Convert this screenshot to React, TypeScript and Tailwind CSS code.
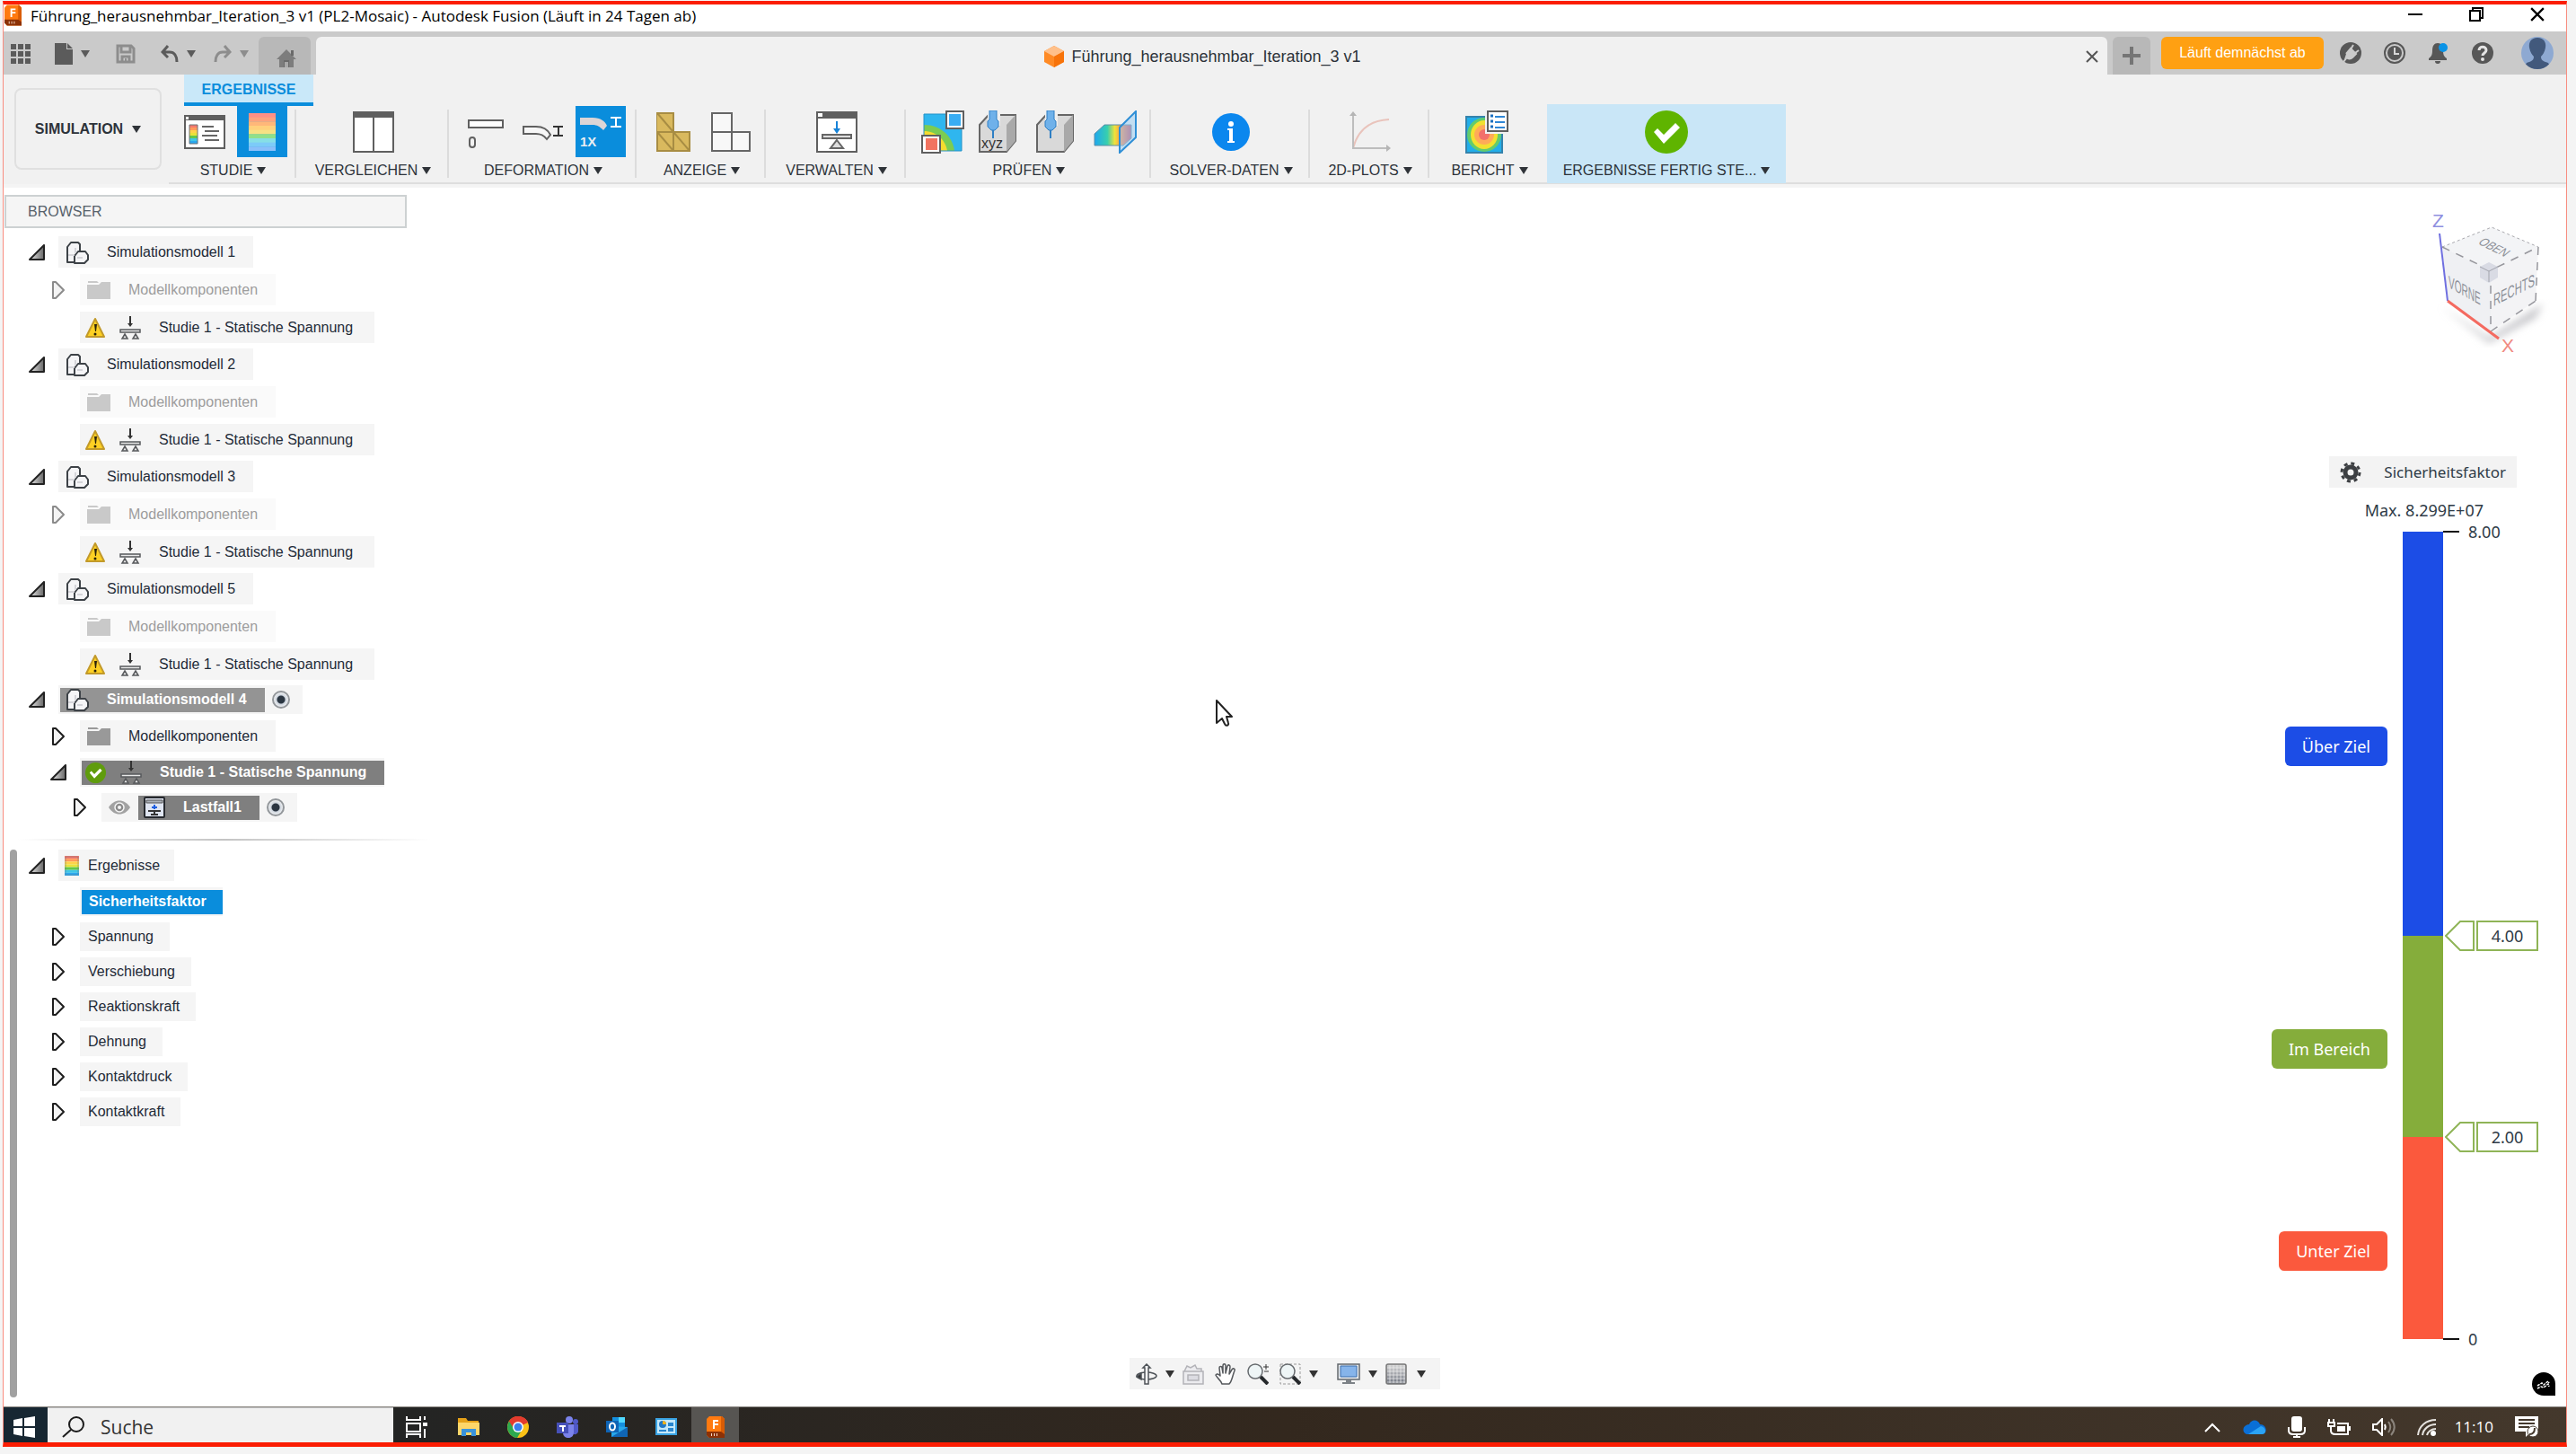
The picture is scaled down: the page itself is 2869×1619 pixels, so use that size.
import type { ReactNode } from "react";

type IconProps = { className?: string };

const Caret = ({ className = "h-2 w-[10px] fill-[#2f3338]" }: IconProps) => (
  <svg viewBox="0 0 10 8" className={className} aria-hidden="true">
    <path d="M0 0h10L5 8z" />
  </svg>
);

/* ---------- title bar and quick access icons ---------- */

const FusionIcon = ({ className }: IconProps) => (
  <svg viewBox="0 0 20 24" className={className} aria-hidden="true">
    <path d="M3 0h14l3 3v21H3l-3-3V3z" fill="#ff7a10" />
    <path d="M16 0h1l3 3v21l-4-4z" fill="#d95c05" />
    <path d="M0 17h16l4 3v4H3l-3-3z" fill="#8c3106" />
    <path d="M7 14V4h6v2H9v2h4v2H9v4z" fill="#fff" />
    <path d="M5 19h1v3H5zM8 19h1v3H8zM11 19h1v3h-1z" fill="#f3d9c8" />
  </svg>
);

const GridIcon = () => (
  <svg viewBox="0 0 22 22" className="h-[22px] w-[22px] fill-[#5b5b5b]">
    {[0, 8, 16].map((y) =>
      [0, 8, 16].map((x) => <rect key={`${x}-${y}`} x={x} y={y} width="6" height="6" />)
    )}
  </svg>
);

const FileIcon = () => (
  <svg viewBox="0 0 20 24" className="h-6 w-5 fill-[#5b5b5b]">
    <path d="M0 0h13v7h7v17H0zM14 0l6 6h-6z" />
  </svg>
);

const SaveIcon = () => (
  <svg viewBox="0 0 22 22" className="h-[22px] w-[22px]" fill="none" stroke="#8d8d8d" strokeWidth="3">
    <path d="M2 2h15l3 3v15H2z" />
    <path d="M6 2v7h10V2M7 20v-6h8v6" />
    <path d="M11 16v4" strokeWidth="2" />
  </svg>
);

const UndoIcon = ({ className = "" }: IconProps) => (
  <svg viewBox="0 0 20 20" className={`h-5 w-5 ${className}`} fill="none" strokeWidth="3">
    <path d="M8 1L2 8l6 6M2 8h8c5 0 8 4 8 11" />
  </svg>
);

const HomeIcon = () => (
  <svg viewBox="0 0 24 20" className="h-5 w-6">
    <path d="M12 0l11 11h-3v9H4v-9H1z" fill="#7d7d7d" />
    <path d="M17 1h3v6h-3zM9 12h6v8H9z" fill="#6a6a6a" />
    <path d="M10 14h4v6h-4z" fill="#a8a8a8" />
  </svg>
);

const DocumentCube = () => (
  <svg viewBox="0 0 22 24" className="h-6 w-[22px]">
    <path d="M11 0l11 6v12l-11 6L0 18V6z" fill="#ff8a24" />
    <path d="M11 0l11 6-11 6L0 6z" fill="#ffc08a" />
    <path d="M11 12l11-6v12l-11 6z" fill="#f7730a" />
  </svg>
);

const CloseIcon = ({ className }: IconProps) => (
  <svg viewBox="0 0 14 14" className={className} fill="none" strokeWidth="2">
    <path d="M1 1l12 12M13 1L1 13" />
  </svg>
);

const PlugIcon = () => (
  <svg viewBox="0 0 24 24" className="h-6 w-6">
    <circle cx="12" cy="12" r="12" fill="#575757" />
    <path d="M7 13l5-6 6 6-4 4c-2 2-5 2-6 0l-4 5" fill="#cbcbcb" stroke="#cbcbcb" strokeWidth="2" />
    <path d="M12 8l3-5M17 12l4-3" stroke="#cbcbcb" strokeWidth="2" />
  </svg>
);

const ClockIcon = () => (
  <svg viewBox="0 0 24 24" className="h-6 w-6" fill="none">
    <circle cx="12" cy="12" r="11" stroke="#575757" strokeWidth="2" />
    <circle cx="12" cy="12" r="8" fill="#575757" />
    <path d="M12 6v7h5" stroke="#d6d6d6" strokeWidth="2" />
  </svg>
);

const BellIcon = () => (
  <svg viewBox="0 0 24 24" className="h-6 w-6">
    <path d="M11 1c4 0 6 3 6 8 0 5 1 7 4 9v2H1v-2c3-2 4-4 4-9 0-5 2-8 6-8zM8 21h6c0 2-1 3-3 3s-3-1-3-3z" fill="#575757" />
    <circle cx="17" cy="6" r="5" fill="#0a93e6" />
  </svg>
);

const HelpIcon = () => (
  <svg viewBox="0 0 24 24" className="h-6 w-6">
    <circle cx="12" cy="12" r="12" fill="#575757" />
    <path d="M8 9c0-5 8-5 8 0 0 3-4 3-4 6" fill="none" stroke="#e4e4e4" strokeWidth="3" />
    <circle cx="12" cy="19" r="2" fill="#e4e4e4" />
  </svg>
);

const Avatar = () => (
  <svg viewBox="0 0 36 36" className="h-9 w-9">
    <clipPath id="avatar">
      <circle cx="18" cy="18" r="18" />
    </clipPath>
    <g clipPath="url(#avatar)">
      <path d="M0 0h36v36H0z" fill="#8ea9d2" />
      <path d="M18 1c7 0 10 5 9 11-1 5-3 8-5 10 0 4 2 5 8 7l4 7H2l4-7c6-2 8-3 8-7-2-2-4-5-5-10C8 6 11 1 18 1z" fill="#42597c" />
    </g>
  </svg>
);

/* ---------- ribbon icons ---------- */

const Spectrum = ({ x, y, width, height }: { x: number; y: number; width: number; height: number }) => {
  const bands = ["#f4796c", "#ff9a5a", "#ffd24a", "#e9e23a", "#63c84a", "#3fc6e8", "#2aa8f0"];
  return (
    <>
      {bands.map((fill, i) => (
        <rect key={fill} x={x} y={y + (i * height) / 7} width={width} height={height / 7} fill={fill} />
      ))}
    </>
  );
};

const StudyPanelIcon = () => (
  <svg viewBox="0 0 46 38" className="h-[38px] w-[46px]">
    <path d="M1 1h44v36H1z" fill="#fff" stroke="#5f5f5f" strokeWidth="2" />
    <path d="M0 0h46v6H0z" fill="#5f5f5f" />
    <path d="M2 2h3v3H2z" fill="#fff" />
    <Spectrum x={6} y={11} width={9} height={21} />
    <path d="M6 11h9v21H6z" fill="none" stroke="#6a7076" />
    <path d="M20 13h13M23 18h16M20 23h17M23 28h16" stroke="#666" strokeWidth="2" />
  </svg>
);

const ResultBandsIcon = () => (
  <svg viewBox="0 0 30 42" className="h-[42px] w-[30px]">
    {["#ff9086", "#ffa27d", "#ffb779", "#ffd07c", "#f5e184", "#8fe08a", "#86dfe6", "#7ccbf8", "#8abffa"].map((fill, i) => (
      <rect key={fill} y={(i * 42) / 9} width="30" height="5" fill={fill} />
    ))}
  </svg>
);

const CompareIcon = () => (
  <svg viewBox="0 0 46 46" className="h-[46px] w-[46px]">
    <path d="M1 1h44v44H1z" fill="#fff" stroke="#5f5f5f" strokeWidth="2" />
    <path d="M0 0h46v7H0z" fill="#5f5f5f" />
    <path d="M23 7v38" stroke="#5f5f5f" strokeWidth="2" />
  </svg>
);

const UndeformedIcon = () => (
  <svg viewBox="0 0 40 46" className="h-[46px] w-10" fill="none" stroke="#606060" strokeWidth="2">
    <path d="M1 10h38v8H1z" fill="#fff" />
    <rect x="2" y="29" width="6" height="11" rx="3" />
  </svg>
);

const ActualIcon = () => (
  <svg viewBox="0 0 46 46" className="h-[46px] w-[46px]" fill="none" stroke="#606060" strokeWidth="2">
    <path d="M1 17h14c8 0 13 3 16 9l-4 5c-4-5-7-6-12-6H1z" fill="#f7f7f7" />
    <path d="M34 17h11M34 27h11M40 17v10" stroke="#333" />
  </svg>
);

const AdjustedIcon = () => (
  <div className="flex flex-col items-start gap-1 text-[15px] leading-4 font-bold text-[#e9eef2]">
    <svg viewBox="0 0 46 18" className="h-[18px] w-[46px]" fill="none">
      <path d="M0 3h14c9 0 14 4 16 9l-4 5c-4-4-7-6-12-6H0z" fill="#dcd5d6" />
      <path d="M34 3h12M34 13h12M40 3v10" stroke="#fff" strokeWidth="2" />
    </svg>
    1X
  </div>
);

const MeshIcon = () => (
  <svg viewBox="0 0 38 44" className="h-[44px] w-[38px]" fill="#d9b95e" stroke="#a88d43" strokeWidth="2">
    <path d="M1 1h18v21h18v21H1z" />
    <path d="M1 1l18 21H1M19 22v21L1 22M37 43L19 22" />
  </svg>
);

const OutlineIcon = () => (
  <svg viewBox="0 0 44 44" className="h-[44px] w-[44px]" fill="#f8f8f8" stroke="#666" strokeWidth="2">
    <path d="M1 1h22v21h20v21H1zM1 22h22v21" />
  </svg>
);

const ManageIcon = () => (
  <svg viewBox="0 0 46 46" className="h-[46px] w-[46px]">
    <path d="M1 1h44v44H1z" fill="#fff" stroke="#5f5f5f" strokeWidth="2" />
    <path d="M0 0h46v8H0z" fill="#5f5f5f" />
    <path d="M2 2h5v4H2z" fill="#fff" />
    <path d="M7 26h32v4H7zM23 32l7 9H16z" fill="#ddd" stroke="#666" strokeWidth="2" />
    <path d="M22 11h2v8h3l-4 6-4-6h3z" fill="#1783d8" />
  </svg>
);

const HotSpotsIcon = () => (
  <svg viewBox="0 0 48 48" className="h-12 w-12">
    <path d="M3 4h42v41H3z" fill="#2fb6ef" />
    <path d="M3 16c19 0 32 13 34 29H3z" fill="#7ccc52" />
    <path d="M3 23c14 0 24 10 26 22H3z" fill="#f6dc2f" />
    <path d="M3 4h42v41H3z" fill="none" stroke="#2592c7" />
    <path d="M28 1h19v19H28zM1 28h20v19H1z" fill="#fff" stroke="#5f5f5f" strokeWidth="2" />
    <path d="M31 4h13v13H31z" fill="#39adf3" />
    <path d="M5 31h13v13H5z" fill="#f27360" />
  </svg>
);

const ProbeIcon = ({ label }: { label?: string }) => (
  <svg viewBox="0 0 48 48" className="h-12 w-12">
    <path d="M1 16L11 5h30v29L31 46H1z" fill="#d9d9d9" stroke="#666" strokeWidth="2" />
    <path d="M31 16L41 5v29L31 46z" fill="#a9a9a9" />
    <path d="M10 4h14v13H10z" fill="#efefef" />
    <path d="M12 0h8v10l2 2v6l-4 4h-4l-4-4v-6l2-2z" fill="#6fb1ea" stroke="#2f7fc4" />
    <path d="M16 22v9" stroke="#2f7fc4" strokeWidth="2" />
    {label && (
      <text x="3" y="42" className="fill-[#333] font-['Liberation_Sans'] text-[16px]">
        {label}
      </text>
    )}
  </svg>
);

const SliceIcon = () => (
  <svg viewBox="0 0 48 48" className="h-12 w-12">
    <defs>
      <linearGradient id="slice">
        <stop offset="0" stopColor="#1ea7ef" />
        <stop offset=".35" stopColor="#37cfae" />
        <stop offset=".55" stopColor="#f0e23a" />
        <stop offset=".75" stopColor="#ff8a4a" />
        <stop offset="1" stopColor="#c2476b" />
      </linearGradient>
    </defs>
    <path d="M1 26l11-10h30v15l-9 8H1z" fill="url(#slice)" stroke="#5d8ea6" />
    <path d="M29 19L47 1v29L29 47z" fill="#9ccdf3" fillOpacity=".55" stroke="#2f8fd6" strokeWidth="2" />
  </svg>
);

const InfoIcon = () => (
  <svg viewBox="0 0 42 42" className="h-[42px] w-[42px]">
    <circle cx="21" cy="21" r="21" fill="#0b87ee" />
    <circle cx="21" cy="12" r="3" fill="#fff" />
    <path d="M17 17h6v14h2v2h-8v-2h2V19h-2z" fill="#fff" />
  </svg>
);

const PlotIcon = () => (
  <svg viewBox="0 0 46 46" className="h-[46px] w-[46px]" fill="none" strokeWidth="2">
    <path d="M4 41C9 22 22 10 44 9" stroke="#e9c3bb" />
    <path d="M4 2v39h40" stroke="#bdbdbd" />
    <path d="M4 0l4 5H0zM46 41l-5 4v-8z" fill="#b5b5b5" />
  </svg>
);

const ReportIcon = () => (
  <svg viewBox="0 0 54 48" className="h-12 w-[54px]">
    <path d="M1 7h40v40H1z" fill="#22aeea" stroke="#3583ac" strokeWidth="2" />
    <ellipse cx="21" cy="27" rx="19" ry="19" fill="#63cc6c" />
    <ellipse cx="21" cy="27" rx="15" ry="16" fill="#f2e130" />
    <ellipse cx="21" cy="27" rx="11" ry="11" fill="#ffab58" />
    <ellipse cx="21" cy="27" rx="6" ry="6" fill="#f2706b" />
    <path d="M22 0h27v26H22z" fill="#f1f1f1" />
    <path d="M25 1h22v22H25z" fill="#fff" stroke="#5f5f5f" strokeWidth="2" />
    <path d="M28 6h3M28 12h3M28 18h3" stroke="#1b6fc0" strokeWidth="3" />
    <path d="M33 7h11M33 13h11M33 19h11" stroke="#2e86d6" strokeWidth="2" />
  </svg>
);

const CheckCircle = ({ className }: IconProps) => (
  <svg viewBox="0 0 48 48" className={className}>
    <circle cx="24" cy="24" r="24" />
    <path d="M10 24l4-4 7 7 13-13 5 5-18 18z" fill="#fff" />
  </svg>
);

/* ---------- browser tree icons ---------- */

const Expanded = () => (
  <svg viewBox="0 0 18 18" className="h-[18px] w-[18px]">
    <defs>
      <linearGradient id="expanded" x1="0" x2="1">
        <stop offset="0" stopColor="#eee" />
        <stop offset="1" stopColor="#666" />
      </linearGradient>
    </defs>
    <path d="M17 1v16H1z" fill="url(#expanded)" stroke="#222" strokeWidth="2" strokeLinejoin="round" />
  </svg>
);

const Collapsed = ({ muted }: { muted?: boolean }) => (
  <svg viewBox="0 0 16 20" className="h-5 w-4" fill="#f4f4f4" strokeWidth="2" strokeLinejoin="round">
    <path d="M2 1h3l9 9-9 9H2z" stroke={muted ? "#8b8b8b" : "#1e1e1e"} />
  </svg>
);

const ModelIcon = () => (
  <svg viewBox="0 0 26 26" className="h-[26px] w-[26px]" stroke="#3d4247" strokeWidth="2" strokeLinejoin="round">
    <path d="M2 7l4-5h8l2 2v7l-3 4v9H2z" fill="#f5f5f7" />
    <path d="M10 17l4-5h8l3 4v5l-4 4H10z" fill="#f5f5f7" />
    <path d="M3 16h7M11 8v6M19 19h-6" stroke="#d5d5da" />
  </svg>
);

const FolderIcon = ({ muted }: { muted?: boolean }) => (
  <svg viewBox="0 0 26 20" className={muted ? "h-5 w-[26px] fill-[#c9c9c9]" : "h-5 w-[26px] fill-[#999]"}>
    <path d="M1 0h10l2 2H1zM0 4h13l3-3h10v19H0z" />
  </svg>
);

const WarningIcon = () => (
  <svg viewBox="0 0 22 24" className="h-6 w-[22px]">
    <path d="M11 2l10 20H1z" fill="#fdd023" stroke="#c29a2a" strokeWidth="2" strokeLinejoin="round" />
    <path d="M10 8h3l-1 8h-1z" fill="#2a2209" />
    <circle cx="11" cy="19" r="1.500" fill="#2a2209" />
  </svg>
);

const StudyIcon = () => (
  <svg viewBox="0 0 24 26" className="h-[26px] w-6" fill="none" stroke="#57595c" strokeWidth="1.500">
    <path d="M12 0v9" stroke="#333" strokeWidth="2" />
    <path d="M9 8h6l-3 4z" fill="#333" stroke="none" />
    <path d="M1 15h22v3H1z" fill="#e8e8e8" />
    <path d="M6 20l3 5H3zM18 20l3 5h-6z" fill="#e8e8e8" />
  </svg>
);

const EyeIcon = () => (
  <svg viewBox="0 0 24 18" className="h-[18px] w-6">
    <path d="M0 9c6-10 18-10 24 0-6 10-18 10-24 0z" fill="#a2a2a2" />
    <circle cx="12" cy="9" r="5" fill="#8a8a8a" stroke="#f5f5f5" strokeWidth="1.500" />
    <circle cx="12" cy="9" r="2" fill="#f5f5f5" />
  </svg>
);

const LoadCaseIcon = () => (
  <svg viewBox="0 0 24 24" className="h-6 w-6">
    <rect x="1" y="1" width="22" height="22" rx="1" fill="#dfe5f1" stroke="#26292e" strokeWidth="2" />
    <path d="M3 4h18v3H3z" fill="#aab0b8" stroke="#555" />
    <path d="M12 9v5M9 12h6" stroke="#1d5fe0" strokeWidth="2" />
    <path d="M5 16h14M12 16v4M8 20h8" stroke="#333" strokeWidth="2" />
  </svg>
);

const LegendIcon = () => (
  <svg viewBox="0 0 16 22" className="h-[22px] w-4">
    <Spectrum x={0} y={0} width={16} height={22} />
    <path d="M1 1h14v20H1z" fill="none" stroke="#6d7a86" strokeOpacity=".5" />
  </svg>
);

/* ---------- canvas ---------- */

const ViewCube = () => (
  <svg viewBox="0 0 140 170" className="h-[170px] w-[140px]" fill="none">
    <defs>
      <filter id="soft">
        <feGaussianBlur stdDeviation="4" />
      </filter>
    </defs>
    <path d="M20 112l52 34 60-38-8 16-52 28z" fill="#c6c6ca" filter="url(#soft)" />
    <path d="M20 45l55-22 52 22-53 26z" fill="#f3f4f6" />
    <path d="M20 45l54 26v68l-48-34z" fill="#eff0f3" />
    <path d="M127 45L74 71v68l50-34z" fill="#f3f3f5" />
    <path d="M20 45l55-22 52 22" stroke="#a8a8ad" strokeDasharray="3 3" />
    <path d="M20 45l54 26 53-26-3 60M74 71v68l50-34" stroke="#97979d" strokeWidth="1.500" strokeDasharray="9 8" />
    <path d="M62 67l10-5 10 5v12l-10 6-10-6z" fill="#d9dbe4" />
    <path d="M62 67l10 5 10-5M72 72v12" stroke="#a2a4ad" />
    <g className="fill-[#8d9199] font-['Liberation_Sans'] text-[19px]">
      <text transform="matrix(.56 .28 -.6 .5 59 41)">OBEN</text>
      <text transform="matrix(.53 .29 0 1 27 90)">VORNE</text>
      <text transform="matrix(.59 -.295 0 1 77 111)">RECHTS</text>
    </g>
    <path d="M17 30l9 75" stroke="#6f6fe0" strokeWidth="2" />
    <path d="M26 105l57 42" stroke="#f46a60" strokeWidth="3" />
    <g className="font-['Liberation_Sans'] text-[21px]">
      <text x="9" y="23" fill="#8f8fe0">Z</text>
      <text x="86" y="162" fill="#f08a80">X</text>
    </g>
  </svg>
);

const GearIcon = () => (
  <svg viewBox="0 0 24 24" className="h-6 w-6" fill="none" stroke="#3c3f42">
    <circle cx="12" cy="12" r="6" strokeWidth="5" />
    <circle cx="12" cy="12" r="10" strokeWidth="3" strokeDasharray="4 3.850" />
  </svg>
);

const OrbitIcon = () => (
  <svg viewBox="0 0 24 24" className="h-6 w-6" fill="none" stroke="#4d5257" strokeWidth="1.500">
    <ellipse cx="12" cy="14" rx="11" ry="4" />
    <path d="M10 23V5H8l4-4 4 4h-2v18z" fill="#fff" />
    <path d="M6 11v7l-5-3z" fill="#333" />
  </svg>
);

const LookAtIcon = () => (
  <svg viewBox="0 0 24 24" className="h-6 w-6" fill="#ececef" stroke="#b3b3b8" strokeWidth="1.500">
    <path d="M2 9l3-6 4 2 5-3 2 4h5v3" />
    <path d="M1 9h22v14H1z" />
    <path d="M6 13h12v6H6z" fill="#dcdce2" />
  </svg>
);

const PanIcon = () => (
  <svg viewBox="0 0 24 24" className="h-6 w-6" fill="#fff" stroke="#55585c" strokeWidth="1.500" strokeLinejoin="round">
    <path d="M8 23c-1-4-6-7-7-10 1-2 3-1 5 1L5 5c0-2 3-2 3 0l1 6V3c0-3 3-3 3 0v8l2-8c1-2 3-1 3 1l-1 8 3-5c1-2 4-1 3 1-3 8-3 12-6 15z" />
  </svg>
);

const ZoomIcon = ({ fit }: { fit?: boolean }) => (
  <svg viewBox="0 0 24 24" className="h-6 w-6" fill="none">
    {fit && <path d="M1 1h22v22H1z" stroke="#999" strokeDasharray="3 2" />}
    <circle cx="9" cy="9" r="8" fill="#eef5f6" stroke="#666a6e" strokeWidth="1.500" />
    <path d="M15 15l8 8" stroke="#26292c" strokeWidth="4" />
    {!fit && <path d="M21 1v6M18 4h6M19 9h5" stroke="#333" />}
  </svg>
);

const DisplayIcon = () => (
  <svg viewBox="0 0 26 24" className="h-6 w-[26px]">
    <path d="M1 1h24v17H1z" fill="#e6e8ea" stroke="#63686d" strokeWidth="1.500" />
    <path d="M4 3h18v12H4z" fill="#86b4ea" stroke="#3a6faf" />
    <path d="M10 18h6v3h4v2H6v-2h4z" fill="#7d8287" />
  </svg>
);

const GridSettingsIcon = () => (
  <svg viewBox="0 0 24 24" className="h-6 w-6">
    <defs>
      <linearGradient id="grid" x1="0" y1="0" x2="0" y2="1">
        <stop offset="0" stopColor="#d6d6d6" />
        <stop offset="1" stopColor="#6f7480" />
      </linearGradient>
    </defs>
    <rect x="1" y="1" width="22" height="22" rx="2" fill="url(#grid)" stroke="#777" strokeWidth="1.500" />
    <path d="M5 2v20M9 2v20M13 2v20M17 2v20M21 2v20M2 5h20M2 9h20M2 13h20M2 17h20M2 21h20" stroke="#f0f0f0" strokeOpacity=".7" />
  </svg>
);

/* ---------- taskbar icons ---------- */

const WindowsIcon = () => (
  <svg viewBox="0 0 24 24" className="h-6 w-6" fill="#fff">
    <path d="M0 4l10-2v9H0zM12 2l12-2v11H12zM0 13h10v9L0 20zM12 13h12v11l-12-2z" />
  </svg>
);

const SearchIcon = () => (
  <svg viewBox="0 0 26 24" className="h-6 w-[26px]" fill="none" stroke="#1b1b1b" strokeWidth="2">
    <circle cx="16" cy="9" r="8" />
    <path d="M10 15l-9 8" />
  </svg>
);

const TaskViewIcon = () => (
  <svg viewBox="0 0 24 24" className="h-6 w-6" fill="none" stroke="#fff" strokeWidth="2">
    <path d="M1 0v4h15V0M1 8h15v9H1zM1 24v-4h15v4M21 0v4M21 14v10" />
    <path d="M19 7h5v4h-5z" fill="#fff" stroke="none" />
  </svg>
);

const ExplorerIcon = () => (
  <svg viewBox="0 0 24 24" className="h-6 w-6">
    <path d="M0 2h9l2 3h12v5H0z" fill="#e5a118" />
    <path d="M0 7h24v14H0z" fill="#fdd669" />
    <path d="M4 22v-8h16v8h-5v-4H9v4z" fill="#3a93da" />
  </svg>
);

const ChromeIcon = () => (
  <svg viewBox="0 0 24 24" className="h-6 w-6">
    <circle cx="12" cy="12" r="12" fill="#fbc116" />
    <path d="M12 12L2 5.500A12 12 0 0 1 23 7z" fill="#e33b2e" />
    <path d="M12 12L2 5.500A12 12 0 0 0 11 24l6-10z" fill="#2da94f" />
    <path d="M12 7h11A12 12 0 0 0 2 5.500l5 8z" fill="#e33b2e" />
    <circle cx="12" cy="12" r="6" fill="#fff" />
    <circle cx="12" cy="12" r="4.500" fill="#3b7fee" />
  </svg>
);

const TeamsIcon = () => (
  <svg viewBox="0 0 24 24" className="h-6 w-6">
    <circle cx="14" cy="4" r="4" fill="#7b83eb" />
    <circle cx="21" cy="6" r="3" fill="#5059c9" />
    <path d="M15 9h9v8c-1 4-6 4-7 1z" fill="#5059c9" />
    <path d="M7 9h12v9c0 8-11 8-12 1z" fill="#7b83eb" />
    <path d="M0 7h13v12H0z" fill="#4650b8" />
    <path d="M3 10h7v2H8v5H6v-5H3z" fill="#fff" />
  </svg>
);

const OutlookIcon = () => (
  <svg viewBox="0 0 24 24" className="h-6 w-6">
    <path d="M7 1h14v12H7z" fill="#1490df" />
    <path d="M14 1h7v6h-7z" fill="#50d9ff" />
    <path d="M6 11l18 1v11H6z" fill="#28a8ea" />
    <path d="M6 23l18-11v11z" fill="#1066b5" />
    <path d="M0 5h14v13H0z" fill="#0f64b5" />
    <ellipse cx="7" cy="11.500" rx="3" ry="4" fill="none" stroke="#fff" strokeWidth="2" />
  </svg>
);

const ControlPanelIcon = () => (
  <svg viewBox="0 0 24 24" className="h-6 w-6">
    <path d="M0 2h24v19H0z" fill="#3aa3e3" />
    <path d="M2 4h20v15H2z" fill="#c4e8fa" />
    <circle cx="8" cy="9" r="4" fill="#1f78c8" />
    <path d="M8 9V5a4 4 0 0 1 4 4z" fill="#f5b21c" />
    <path d="M14 7h6v4h-6zM14 13h6v4h-6zM4 15h8v2H4z" fill="#2a86cf" />
  </svg>
);

const TrayIcons = () => (
  <div className="flex items-center gap-6 text-white">
    <svg viewBox="0 0 20 12" className="h-3 w-5" fill="none" stroke="#fff" strokeWidth="2">
      <path d="M2 11l8-8 8 8" />
    </svg>
    <svg viewBox="0 0 26 16" className="h-4 w-[26px]">
      <path d="M7 5c2-6 10-6 12 0 8 0 9 11 2 11H6C-1 16-2 6 7 5z" fill="#0a6fd6" />
      <path d="M6 16L20 7c6 1 7 9 1 9z" fill="#2ba3f5" />
    </svg>
    <svg viewBox="0 0 20 24" className="h-6 w-5" fill="none" stroke="#fff" strokeWidth="2">
      <rect x="5" y="1" width="10" height="15" rx="2" fill="#fff" />
      <path d="M1 12v4c0 3 2 4 5 4h8c3 0 5-1 5-4v-4M10 20v3M6 23h8" />
    </svg>
    <svg viewBox="0 0 26 20" className="h-5 w-[26px]" fill="none" stroke="#fff" strokeWidth="2">
      <path d="M2 1v3M7 1v3M1 5h7v4H1zM4 9v5c0 3 2 4 5 4h14V6H11" />
      <path d="M11 9h9v6h-9z" fill="#fff" stroke="none" />
      <path d="M25 9v5" />
    </svg>
    <svg viewBox="0 0 26 20" className="h-5 w-[26px]" fill="none" stroke="#fff" strokeWidth="2">
      <path d="M1 7h4l6-6v18l-6-6H1z" />
      <path d="M14 7c1 2 1 4 0 6" />
      <path d="M18 4c3 4 3 8 0 12M21 1c5 6 5 12 0 18" stroke="#8b847c" />
    </svg>
    <svg viewBox="0 0 22 20" className="h-5 w-[22px]" fill="none" stroke="#e6e3df" strokeWidth="2">
      <path d="M1 19C2 9 10 2 21 2M6 19C7 12 13 7 21 7M11 19c1-4 5-7 10-7" />
      <circle cx="18" cy="17" r="3" fill="#fff" stroke="none" />
    </svg>
  </div>
);

const NotificationIcon = () => (
  <svg viewBox="0 0 26 24" className="h-6 w-[26px]">
    <path d="M0 0h26v17h-8l-6 6v-6H0z" fill="#fff" />
    <path d="M4 4h18M4 8h18M4 12h12" stroke="#44382c" strokeWidth="2" />
    <circle cx="20" cy="17" r="6" fill="#fff" stroke="#44382c" />
    <path d="M22 13c0 5-2 7-6 7" fill="none" stroke="#44382c" strokeWidth="2" />
  </svg>
);

/* ---------- page parts ---------- */

const TitleBar = () => (
  <header className="flex h-[30px] items-center bg-white pl-px">
    <FusionIcon className="h-6 w-[19px] self-start" />
    <h1 className="ml-[10px] self-start pt-px font-['Open_Sans',sans-serif] text-[17px] leading-6 text-black">
      Führung_herausnehmbar_Iteration_3 v1 (PL2-Mosaic) - Autodesk Fusion (Läuft in 24 Tagen ab)
    </h1>
    <div className="mr-6 ml-auto flex items-center gap-[52px] self-start pt-[3px]">
      <button aria-label="Minimieren" className="flex h-4 w-4 items-center">
        <span className="h-[2px] w-4 bg-black" />
      </button>
      <button aria-label="Verkleinern">
        <svg viewBox="0 0 16 16" className="h-4 w-4" fill="none" stroke="#000" strokeWidth="2">
          <path d="M1 4h11v11H1zM4 4V1h11v11h-3" />
        </svg>
      </button>
      <button aria-label="Schließen">
        <CloseIcon className="h-4 w-4 stroke-black" />
      </button>
    </div>
  </header>
);

const TabStrip = () => (
  <div className="flex h-12 items-stretch bg-[#cacaca] pt-[6px]">
    <div className="flex items-center pr-[11px] pb-1 pl-2">
      <button aria-label="Datengruppe" className="mr-[27px]"><GridIcon /></button>
      <button aria-label="Datei" className="mr-[29px] flex items-center gap-[9px]">
        <FileIcon />
        <Caret className="h-2 w-[10px] fill-[#5b5b5b]" />
      </button>
      <button aria-label="Speichern" className="mr-7"><SaveIcon /></button>
      <button aria-label="Rückgängig" className="mr-5 flex items-center gap-[9px]">
        <UndoIcon className="stroke-[#5b5b5b]" />
        <Caret className="h-2 w-[10px] fill-[#5b5b5b]" />
      </button>
      <button aria-label="Wiederherstellen" className="flex items-center gap-[9px]">
        <UndoIcon className="-scale-x-100 stroke-[#8d8d8d]" />
        <Caret className="h-2 w-[10px] fill-[#8d8d8d]" />
      </button>
    </div>
    <button aria-label="Startseite" className="mr-[6px] flex w-[58px] items-center justify-center rounded-t-md bg-[#b8b8b8] pt-[6px] pl-1">
      <HomeIcon />
    </button>
    <div className="mr-[6px] flex flex-1 items-center rounded-t-md bg-[#f1f1f1] pt-[2px] pr-[10px]">
      <div className="flex flex-1 items-center justify-center gap-2 pl-1 text-[18px] leading-6 text-[#2d333a]">
        <DocumentCube />
        Führung_herausnehmbar_Iteration_3 v1
      </div>
      <button aria-label="Tab schließen"><CloseIcon className="h-[14px] w-[14px] stroke-[#555]" /></button>
    </div>
    <button aria-label="Neuer Tab" className="mr-3 flex w-[42px] items-center justify-center rounded-t-md bg-[#b8b8b8]">
      <svg viewBox="0 0 20 20" className="h-5 w-5 fill-[#757575]"><path d="M8 0h4v8h8v4h-8v8H8v-8H0V8h8z" /></svg>
    </button>
    <button className="mr-[18px] h-9 w-[181px] rounded-md bg-[#ffa012] text-[16px] leading-6 text-white">
      Läuft demnächst ab
    </button>
    <div className="flex h-9 items-center gap-[25px] pr-[14px]">
      <button aria-label="Erweiterungen"><PlugIcon /></button>
      <button aria-label="Auftragsstatus"><ClockIcon /></button>
      <button aria-label="Benachrichtigungen"><BellIcon /></button>
      <button aria-label="Hilfe"><HelpIcon /></button>
      <button aria-label="Profil" className="ml-[6px]"><Avatar /></button>
    </div>
  </div>
);

type Tool = { name: string; icon: ReactNode; active?: boolean };

const toolGroups: { label: string; width: string; tools: Tool[] }[] = [
  {
    label: "STUDIE",
    width: "w-[142px]",
    tools: [
      { name: "Studieneinstellungen", icon: <StudyPanelIcon /> },
      { name: "Ergebnisse anzeigen", icon: <ResultBandsIcon />, active: true },
    ],
  },
  { label: "VERGLEICHEN", width: "w-[170px]", tools: [{ name: "Vergleichen", icon: <CompareIcon /> }] },
  {
    label: "DEFORMATION",
    width: "w-[209px]",
    tools: [
      { name: "Nicht deformiert", icon: <UndeformedIcon /> },
      { name: "Tatsächlich", icon: <ActualIcon /> },
      { name: "Angepasst", icon: <AdjustedIcon />, active: true },
    ],
  },
  {
    label: "ANZEIGE",
    width: "w-[144px]",
    tools: [
      { name: "Netz", icon: <MeshIcon /> },
      { name: "Kanten", icon: <OutlineIcon /> },
    ],
  },
  { label: "VERWALTEN", width: "w-[156px]", tools: [{ name: "Verwalten", icon: <ManageIcon /> }] },
  {
    label: "PRÜFEN",
    width: "w-[273px]",
    tools: [
      { name: "Minimum und Maximum", icon: <HotSpotsIcon /> },
      { name: "Punktprüfung", icon: <ProbeIcon label="xyz" /> },
      { name: "Oberflächenprüfung", icon: <ProbeIcon /> },
      { name: "Schnittebene", icon: <SliceIcon /> },
    ],
  },
  { label: "SOLVER-DATEN", width: "w-[177px]", tools: [{ name: "Solver-Daten", icon: <InfoIcon /> }] },
  { label: "2D-PLOTS", width: "w-[133px]", tools: [{ name: "2D-Plots", icon: <PlotIcon /> }] },
  { label: "BERICHT", width: "w-[131px]", tools: [{ name: "Bericht", icon: <ReportIcon /> }] },
];

const GroupLabel = ({ children }: { children: ReactNode }) => (
  <button className="flex h-[29px] items-center gap-[5px] text-[16px] whitespace-nowrap text-[#2d333a]">
    {children}
    <Caret />
  </button>
);

const Ribbon = () => (
  <div className="flex h-[126px] border-b-4 border-[#f4f4f4] bg-[#f1f1f1]">
    <button className="mt-[15px] ml-3 flex h-[91px] w-[164px] items-center justify-center gap-[10px] rounded-lg border-2 border-[#e0e0e0] text-[16px] font-bold text-[#2d333a]">
      SIMULATION
      <Caret />
    </button>
    <div className="ml-2 flex flex-1 flex-col border-b-2 border-[#dedede]">
      <nav className="h-[33px] pl-[17px]">
        <a href="#ergebnisse" className="relative flex h-[35px] w-[144px] items-center justify-center border-b-4 border-[#0a8ddc] bg-[#c9e8f9] pt-[2px] text-[16px] font-bold text-[#0a8ddc]">
          ERGEBNISSE
        </a>
      </nav>
      <div className="flex flex-1">
        {toolGroups.map(({ label, width, tools }, i) => (
          <div key={label} className={`flex ${width}`}>
            <div className="flex flex-1 flex-col items-center pt-[2px] pl-[3px]">
              <div className="flex gap-2">
                {tools.map(({ name, icon, active }) => (
                  <button
                    key={name}
                    aria-label={name}
                    className={`flex h-[57px] w-14 items-center justify-center ${active ? "bg-[#0a8ddc]" : ""}`}
                  >
                    {icon}
                  </button>
                ))}
              </div>
              <GroupLabel>{label}</GroupLabel>
            </div>
            {i < toolGroups.length - 1 && <span className="my-[6px] w-[2px] bg-[#dcdcdc]" />}
          </div>
        ))}
        <div className="flex w-[266px] flex-col items-center bg-[#c9e6f7] pt-[2px]">
          <button aria-label="Fertig stellen" className="flex h-[57px] items-center">
            <CheckCircle className="h-12 w-12 fill-[#5fb400]" />
          </button>
          <GroupLabel>ERGEBNISSE FERTIG STE...</GroupLabel>
        </div>
      </div>
    </div>
  </div>
);

const indents = ["pl-[25px]", "pl-[49px]", "pl-[73px]"];

const TreeRow = ({ level, toggle, children }: { level: 0 | 1 | 2; toggle?: ReactNode; children: ReactNode }) => (
  <li className={`flex items-center gap-3 text-[16px] text-[#1f2b38] ${indents[level]}`}>
    <span className="flex w-6 justify-center">
      {toggle && <button aria-label="Aufklappen">{toggle}</button>}
    </span>
    {children}
  </li>
);

const ActiveRadio = ({ name, label }: { name: string; label: string }) => (
  <input
    type="radio"
    name={name}
    aria-label={label}
    defaultChecked
    className="h-5 w-5 appearance-none rounded-full border-2 border-[#93979b] bg-[radial-gradient(circle,#2b3642_0_4px,#cdd4dd_5px,#eef0f2_8px)]"
  />
);

const models = [
  { id: 1, expandable: true },
  { id: 2, expandable: false },
  { id: 3, expandable: true },
  { id: 5, expandable: false },
];

const resultTypes = ["Spannung", "Verschiebung", "Reaktionskraft", "Dehnung", "Kontaktdruck", "Kontaktkraft"];

const Browser = () => (
  <aside className="flex w-[475px] flex-col pt-2 pb-[10px]">
    <h2 className="ml-px flex h-[37px] w-[448px] items-center border-2 border-[#cdd1d2] bg-[#f5f5f5] pl-6 text-[16px] text-[#56616a]">
      BROWSER
    </h2>
    <div className="mt-[9px] flex flex-col gap-[6px]">
      {models.map(({ id, expandable }) => (
        <ul key={id} className="flex flex-col gap-[7px]">
          <TreeRow level={0} toggle={<Expanded />}>
            <div className="flex h-[35px] items-center gap-5 bg-[#f5f5f5] pr-5 pl-2">
              <ModelIcon />
              Simulationsmodell {id}
            </div>
          </TreeRow>
          <TreeRow level={1} toggle={expandable && <Collapsed muted />}>
            <div className="flex h-[35px] items-center gap-5 bg-[#fafafa] pr-5 pl-2 text-[#9d9d9d]">
              <FolderIcon muted />
              Modellkomponenten
            </div>
          </TreeRow>
          <TreeRow level={1}>
            <div className="flex h-[35px] items-center bg-[#f5f5f5] pr-6 pl-[6px]">
              <WarningIcon />
              <span className="mr-5 ml-4"><StudyIcon /></span>
              Studie 1 - Statische Spannung
            </div>
          </TreeRow>
        </ul>
      ))}
      <ul className="flex flex-col gap-[7px]">
        <TreeRow level={0} toggle={<Expanded />}>
          <div className="flex h-8 items-center bg-[#f5f5f5] pr-[14px] pl-[2px]">
            <div className="mr-2 flex h-[27px] items-center gap-5 bg-[#949494] pr-5 pl-[6px] font-bold text-white">
              <ModelIcon />
              Simulationsmodell 4
            </div>
            <ActiveRadio name="modell" label="Simulationsmodell 4 aktivieren" />
          </div>
        </TreeRow>
        <TreeRow level={1} toggle={<Collapsed />}>
          <div className="flex h-[35px] items-center gap-5 bg-[#f5f5f5] pr-5 pl-2">
            <FolderIcon />
            Modellkomponenten
          </div>
        </TreeRow>
        <TreeRow level={1} toggle={<Expanded />}>
          <div className="flex h-8 items-center bg-[#f5f5f5] pl-[2px]">
            <div className="flex h-[27px] items-center bg-[#7f7f7f] pr-5 pl-1 font-bold text-white">
              <CheckCircle className="h-[23px] w-[23px] fill-[#5f9c0c]" />
              <span className="mr-5 ml-4"><StudyIcon /></span>
              Studie 1 - Statische Spannung
            </div>
          </div>
        </TreeRow>
        <TreeRow level={2} toggle={<Collapsed />}>
          <div className="flex h-8 items-center bg-[#f5f5f5] pr-[14px] pl-2">
            <button aria-label="Sichtbarkeit" className="mr-[9px]"><EyeIcon /></button>
            <div className="mr-2 flex h-[27px] items-center gap-5 bg-[#7f7f7f] pr-5 pl-[6px] font-bold text-white">
              <LoadCaseIcon />
              Lastfall1
            </div>
            <ActiveRadio name="lastfall" label="Lastfall1 aktivieren" />
          </div>
        </TreeRow>
      </ul>
    </div>

    <div className="mt-[19px] ml-4 h-[2px] bg-linear-to-r from-transparent via-[#c4c4c4] to-transparent" />

    <div className="mt-[10px] flex flex-1 items-stretch">
      <div className="ml-[7px] w-2 rounded-full bg-[#a1a1a1]" />
      <ul className="-ml-[15px] flex flex-col gap-[7px]">
        <TreeRow level={0} toggle={<Expanded />}>
          <div className="flex h-[35px] items-center gap-[10px] bg-[#f5f5f5] pr-4 pl-[7px]">
            <LegendIcon />
            Ergebnisse
          </div>
        </TreeRow>
        <TreeRow level={1}>
          <div className="flex h-8 items-center bg-[#f5f5f5] pl-[2px]">
            <div className="flex h-[27px] items-center bg-[#0a8ddc] pr-[18px] pl-2 font-bold text-white">
              Sicherheitsfaktor
            </div>
          </div>
        </TreeRow>
        {resultTypes.map((name) => (
          <TreeRow key={name} level={1} toggle={<Collapsed />}>
            <div className="flex h-8 items-center bg-[#f5f5f5] pr-[18px] pl-[9px]">{name}</div>
          </TreeRow>
        ))}
      </ul>
    </div>
  </aside>
);

const NavigationBar = () => (
  <div className="mb-[19px] flex h-[35px] items-center self-end bg-[#f4f4f4] px-[7px]">
    <button aria-label="Orbit" className="mr-2 flex items-center gap-2">
      <OrbitIcon />
      <Caret className="h-2 w-3 fill-[#333]" />
    </button>
    <div className="mr-2 flex items-center gap-3">
      <button aria-label="Ansicht auf"><LookAtIcon /></button>
      <button aria-label="Pan"><PanIcon /></button>
      <button aria-label="Zoom"><ZoomIcon /></button>
      <button aria-label="Einpassen"><ZoomIcon fit /></button>
    </div>
    <Caret className="mr-5 h-2 w-3 fill-[#333]" />
    <button aria-label="Anzeigeeinstellungen" className="mr-2 flex items-center gap-2">
      <DisplayIcon />
      <Caret className="h-2 w-3 fill-[#333]" />
    </button>
    <button aria-label="Raster und Fang" className="mr-2 flex items-center gap-[10px]">
      <GridSettingsIcon />
      <Caret className="h-2 w-3 fill-[#333]" />
    </button>
  </div>
);

const ranges = [
  { label: "Über Ziel", size: "flex-[4]", color: "bg-[#1c4de6]" },
  { label: "Im Bereich", size: "flex-[2]", color: "bg-[#85ad3b]" },
  { label: "Unter Ziel", size: "flex-[2]", color: "bg-[#fb593d]" },
];

const maxValue = 8;
const limits = [4, 2];

const Legend = () => (
  <section className="mt-[108px] flex flex-1 flex-col font-['Noto_Sans',sans-serif] text-[18px] leading-6 text-[#2f3b47]">
    <div className="mr-[55px] flex h-[35px] items-center gap-[25px] self-end bg-[#f3f3f3] px-3 text-[17px]">
      <button aria-label="Legendeneinstellungen"><GearIcon /></button>
      Sicherheitsfaktor
    </div>
    <p className="mt-[13px] mr-[92px] mb-3 self-end">Max. 8.299E+07</p>
    <div className="flex flex-1 justify-end pb-[75px]">
      <div className="mr-[17px] flex flex-col">
        {ranges.map(({ label, size, color }) => (
          <div key={label} className={`flex items-center justify-end ${size}`}>
            <div className="pt-7">
              <span className={`flex h-11 items-center rounded-md px-[19px] text-white ${color}`}>{label}</span>
            </div>
          </div>
        ))}
      </div>
      <div className="flex w-[45px] flex-col">
        {ranges.map(({ label, size, color }) => (
          <div key={label} className={`${size} ${color}`} />
        ))}
      </div>
      <div className="relative flex w-[137px] flex-col justify-between">
        {["8.00", "0"].map((tick) => (
          <div key={tick} className="flex h-0 items-center gap-[10px]">
            <span className="h-[2px] w-[18px] bg-[#111]" />
            {tick}
          </div>
        ))}
        {limits.map((value) => (
          <label
            key={value}
            className="absolute left-[2px] flex -translate-y-1/2 items-center gap-[2px]"
            style={{ top: `${(1 - value / maxValue) * 100}%` }}
          >
            <svg viewBox="0 0 33 34" className="h-[34px] w-[33px]" fill="#fff" stroke="#8fb457" strokeWidth="2">
              <path d="M1 17L17 1h15v32H17z" />
            </svg>
            <input
              aria-label="Grenzwert"
              defaultValue={value.toFixed(2)}
              className="h-[34px] w-[69px] border-2 border-[#8fb457] bg-white text-center"
            />
          </label>
        ))}
      </div>
    </div>
  </section>
);

const Taskbar = () => (
  <footer className="flex h-10 items-stretch border-t border-[#8b8782] bg-linear-to-r from-[#1c2225] via-[#33281e] to-[#44382c]">
    <button aria-label="Start" className="flex w-[49px] items-center justify-center bg-[#172732] pt-1 pr-[3px]">
      <WindowsIcon />
    </button>
    <label className="mr-[14px] flex w-[385px] items-center gap-[17px] border-t border-[#bdbdbd] bg-[#f1f1f1] pt-1 pl-4">
      <SearchIcon />
      <input
        type="search"
        aria-label="Suche"
        placeholder="Suche"
        className="w-0 flex-1 font-['Open_Sans',sans-serif] text-[21px] leading-7 text-[#333] placeholder:text-[#333]"
      />
    </label>
    <div className="flex items-center gap-[31px] pt-1">
      <button aria-label="Taskansicht" className="mr-[3px]"><TaskViewIcon /></button>
      <button aria-label="Explorer"><ExplorerIcon /></button>
      <button aria-label="Chrome"><ChromeIcon /></button>
      <button aria-label="Teams"><TeamsIcon /></button>
      <button aria-label="Outlook"><OutlookIcon /></button>
      <button aria-label="Systemsteuerung"><ControlPanelIcon /></button>
    </div>
    <button aria-label="Autodesk Fusion" className="ml-4 flex w-[53px] items-center justify-center bg-[#575552] pt-1">
      <FusionIcon className="h-6 w-5" />
    </button>
    <div className="mr-[31px] ml-auto flex items-center gap-6 pt-1">
      <TrayIcons />
      <time className="-ml-1 font-['Open_Sans',sans-serif] text-[17px] leading-6 text-white">11:10</time>
      <button aria-label="Info-Center"><NotificationIcon /></button>
    </div>
  </footer>
);

export default function App() {
  return (
    <div className="flex min-h-screen flex-col bg-[#f4f4f4] pt-px pr-[10px] pb-2 pl-[3px] font-['Liberation_Sans',Arial,sans-serif]">
      <div className="flex flex-1 flex-col border-x border-t-4 border-b-[5px] border-x-[#f98d80] border-t-[#fb1d03] border-b-[#fb1d03] bg-white">
        <TitleBar />
        <TabStrip />
        <Ribbon />
        <main className="relative flex flex-1">
          <Browser />
          <div className="flex flex-1 justify-center">
            <NavigationBar />
          </div>
          <div className="flex w-[475px] flex-col">
            <div className="mt-[21px] mr-[18px] self-end"><ViewCube /></div>
            <Legend />
          </div>
          <svg viewBox="0 0 20 30" className="absolute top-[42%] left-[47.300%] h-[30px] w-5" fill="#fff" stroke="#222" strokeWidth="2" strokeLinejoin="round">
            <path d="M1 1v25l6-5 3 6c1 3 5 2 4-1l-2-7h6z" />
          </svg>
          <button aria-label="Assistent" className="absolute right-3 bottom-3">
            <svg viewBox="0 0 26 26" className="h-[26px] w-[26px]">
              <path d="M13 0a13 13 0 0 1 13 13v13H13a13 13 0 0 1 0-26z" fill="#000" />
              <path d="M6 15l5-3 2 2 5-4 1 2M6 18l4-2 3 1 5-4 1 3" fill="none" stroke="#fff" strokeWidth="1.500" strokeDasharray="3 1" />
            </svg>
          </button>
        </main>
        <Taskbar />
      </div>
    </div>
  );
}
